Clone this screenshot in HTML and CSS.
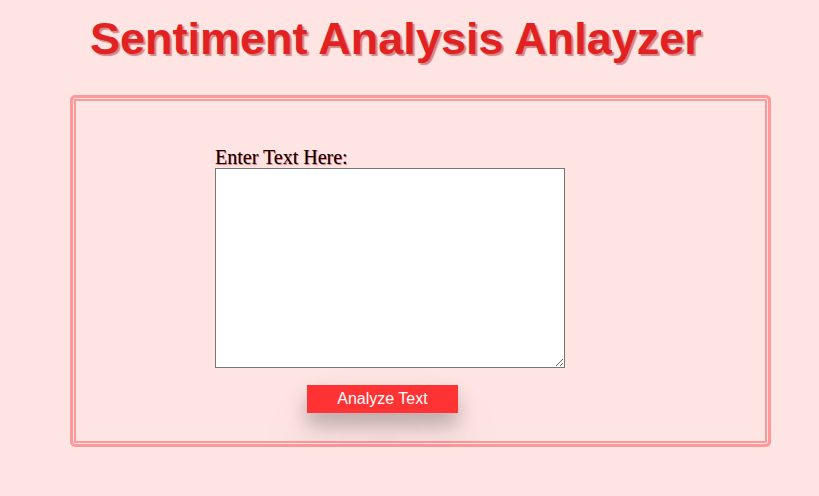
FILE: index.html
```html
<!DOCTYPE html>
<html lang="en">
<head>
    <meta charset="UTF-8">
    <title>Sentiment Analysis Anlayzer</title>
    <link rel="stylesheet" href="styles.css">
</head>
<body>

    <!-- Heading -->
    <h1 class="title">Sentiment Analysis Anlayzer</h1>

    <!-- Analyzer form -->
    <div class="analyzer-box">
        <form class="analyzer-form" onsubmit="return false;">
            <label for="inputText" class="text-label">Enter Text Here:</label>
            <textarea id="inputText" class="text-input"></textarea>
            <button type="submit" class="analyze-btn">Analyze Text</button>
        </form>
    </div>

</body>
</html>
```

FILE: styles.css
```css
body {
    background: #ffe4e4;
    margin: 0;
    font-family: 'Liberation Serif', serif;
}

.title {
    font-family: 'Liberation Sans', Arial, sans-serif;
    font-weight: bold;
    font-size: 45px;
    line-height: 50px;
    color: #e22222;
    text-shadow: 2px 2px 1px rgba(150, 20, 20, 0.45);
    margin: 14px 0 0 90px;
}

.analyzer-box {
    width: 701px;
    box-sizing: border-box;
    margin: 31px 0 0 70px;
    border: 3px solid #ff9999;
    border-radius: 5px;
    box-shadow: inset 0 0 0 1px #ffe4e4, inset 0 0 0 3px #ff9999;
    padding: 48px 0 31px 142px;
}

.analyzer-form {
    display: flex;
    flex-direction: column;
    align-items: flex-start;
}

.text-label {
    font-size: 20px;
    line-height: 22px;
    color: #000;
    text-shadow: 1px 1px 0 rgba(255, 60, 60, 0.7);
}

.text-input {
    box-sizing: border-box;
    width: 350px;
    height: 200px;
    border: 1px solid #767676;
    background: #fff;
    margin: 0;
}

.analyze-btn {
    margin: 17px 0 0 92px;
    width: 151px;
    height: 28px;
    border: none;
    background: #ff3333;
    color: #fff;
    font-family: 'Liberation Sans', Arial, sans-serif;
    font-size: 16px;
    cursor: pointer;
    box-shadow: 0 12px 20px rgba(0, 0, 0, 0.25), 0 40px 70px rgba(0, 0, 0, 0.09);
}
```
